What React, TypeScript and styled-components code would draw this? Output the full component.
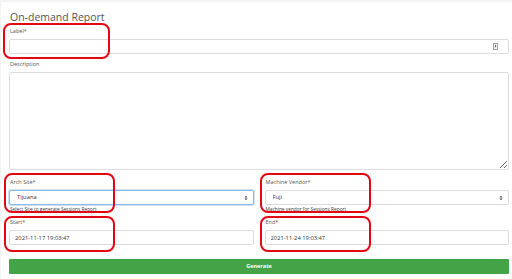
import React from "react";
import styled, { createGlobalStyle } from "styled-components";

const Global = createGlobalStyle`
  html, body { margin: 0; padding: 0; background: #f4f4f4; }
  body { font-family: "Open Sans", "Liberation Sans", sans-serif; line-height: 1; }
  * { box-sizing: border-box; }
`;

const Page = styled.div`
  position: relative;
  width: 512px;
  height: 279px;
  overflow: hidden;
`;

const Card = styled.div`
  margin: 2px 0 0 1px;
  height: 277px;
  background: #fff;
  padding: 8px 3px 0 8px;
  display: flex;
  flex-direction: column;
`;

const Title = styled.h1`
  margin: 0 0 3px 1px;
  font-size: 10.5px;
  line-height: 14px;
  font-weight: 400;
  color: #555;
`;

const Field = styled.div<{ $mt?: number }>`
  display: flex;
  flex-direction: column;
  margin-top: ${(p) => p.$mt ?? 0}px;
`;

const Label = styled.label`
  display: block;
  font-size: 5.5px;
  line-height: 8px;
  color: #555;
  margin: 0 0 4px 1px;
`;

const inputBase = `
  display: block;
  width: 100%;
  height: 15px;
  margin: 0;
  border: 1px solid #dcdcdc;
  border-radius: 2px;
  background: #fff;
  font-family: "Open Sans", "Liberation Sans", sans-serif;
  font-size: 5.8px;
  line-height: 13px;
  color: #333;
  outline: none;
`;

const Input = styled.input`
  ${inputBase}
  padding: 0 5px;
`;

const InputWrap = styled.div`
  position: relative;
  line-height: 0;
`;

const KeyIcon = styled.svg`
  position: absolute;
  right: 11px;
  top: 4px;
`;

const TextArea = styled.textarea`
  ${inputBase}
  height: 98px;
  resize: vertical;
  padding: 4px 6px;
`;

const Row = styled.div`
  display: grid;
  grid-template-columns: 1fr 1fr;
  column-gap: 11px;
  margin-top: 8px;
`;

const Column = styled.div`
  display: flex;
  flex-direction: column;
`;

const Select = styled.select<{ $focused?: boolean }>`
  ${inputBase}
  appearance: none;
  -webkit-appearance: none;
  padding: 0 7px;
  border-color: ${(p) => (p.$focused ? "#86b9e8" : "#dcdcdc")};
  box-shadow: ${(p) => (p.$focused ? "0 0 0 1px rgba(120,170,230,0.35)" : "none")};
`;

const Chevron = styled.svg`
  position: absolute;
  right: 6px;
  top: 4.5px;
  pointer-events: none;
`;

const Help = styled.small`
  display: block;
  margin: 1px 0 0 1px;
  font-size: 4.8px;
  line-height: 6px;
  color: #333;
`;

const Button = styled.button`
  display: block;
  margin-top: 14px;
  height: 15px;
  width: 100%;
  border: none;
  border-radius: 1px;
  background: #43a346;
  color: #fff;
  font-family: "Open Sans", "Liberation Sans", sans-serif;
  font-size: 5.5px;
  font-weight: 700;
  line-height: 15px;
  padding: 0;
`;

const Mark = styled.div`
  position: absolute;
  border: 2.5px solid #e30613;
  border-radius: 8px;
  pointer-events: none;
`;

const ChevronIcon = () => (
  <Chevron width="4" height="6" viewBox="0 0 4 6">
    <path d="M0.5 2.4 L2 0.8 L3.5 2.4 Z M0.5 3.6 L2 5.2 L3.5 3.6 Z" fill="#444" />
  </Chevron>
);

const marks = [
  { left: 3, top: 23, width: 107, height: 36 },
  { left: 4, top: 173, width: 111, height: 40 },
  { left: 4, top: 216, width: 111, height: 36 },
  { left: 260, top: 173, width: 111, height: 40 },
  { left: 260, top: 216, width: 111, height: 36 },
];

export default function App() {
  return (
    <>
      <Global />
      <Page>
        <Card>
          <Title>On-demand Report</Title>
          <Field>
            <Label>Label*</Label>
            <InputWrap>
              <Input readOnly defaultValue="" />
              <KeyIcon width="5" height="7" viewBox="0 0 5 7">
                <rect x="0.5" y="0.5" width="4" height="6" fill="#f2f2f2" stroke="#888" strokeWidth="0.8" />
                <rect x="2" y="2" width="1" height="2.2" fill="#666" />
              </KeyIcon>
            </InputWrap>
          </Field>
          <Field $mt={6}>
            <Label>Description</Label>
            <TextArea readOnly defaultValue="" />
          </Field>
          <Row>
            <Column>
              <Label>Arch Site*</Label>
              <InputWrap>
                <Select $focused defaultValue="Tijuana">
                  <option>Tijuana</option>
                </Select>
                <ChevronIcon />
              </InputWrap>
              <Help>Select Site to generate Sessions Report</Help>
              <Field $mt={6}>
                <Label>Start*</Label>
                <Input readOnly defaultValue="2021-11-17 19:03:47" />
              </Field>
            </Column>
            <Column>
              <Label>Machine Vendor*</Label>
              <InputWrap>
                <Select defaultValue="Fuji">
                  <option>Fuji</option>
                </Select>
                <ChevronIcon />
              </InputWrap>
              <Help>Machine vendor for Sessions Report</Help>
              <Field $mt={6}>
                <Label>End*</Label>
                <Input readOnly defaultValue="2021-11-24 19:03:47" />
              </Field>
            </Column>
          </Row>
          <Button>Generate</Button>
        </Card>
        {marks.map((m, i) => (
          <Mark key={i} style={{ left: m.left, top: m.top, width: m.width, height: m.height }} />
        ))}
      </Page>
    </>
  );
}
